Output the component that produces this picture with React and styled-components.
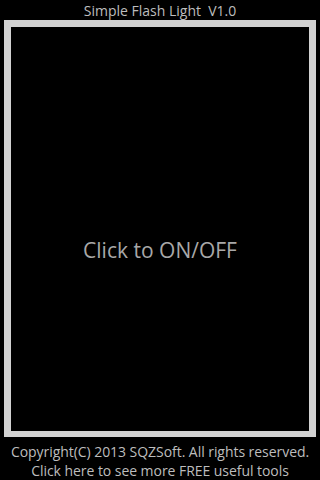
import React from "react";
import styled, { createGlobalStyle } from "styled-components";

const Global = createGlobalStyle`
  html, body {
    margin: 0;
    padding: 0;
    background: #000;
  }
  body {
    font-family: "Open Sans", "Noto Sans", sans-serif;
  }
`;

const Screen = styled.div`
  width: 320px;
  height: 480px;
  display: flex;
  flex-direction: column;
  background: #000;
  overflow: hidden;
`;

const TitleBar = styled.div`
  height: 20px;
  display: flex;
  align-items: center;
  justify-content: center;
  color: #bdbdbd;
  font-size: 14px;
  white-space: pre;
`;

const Frame = styled.button`
  flex: 1;
  margin: 0 4px;
  border: 7px solid #d2d2d2;
  border-bottom-width: 6px;
  background: #000;
  display: flex;
  align-items: center;
  justify-content: center;
  color: #a8a8a8;
  font-family: inherit;
  font-size: 21px;
  padding: 42px 0 0;
  cursor: pointer;
`;

const Footer = styled.div`
  height: 43px;
  padding-top: 4px;
  box-sizing: border-box;
  display: flex;
  flex-direction: column;
  align-items: center;
  justify-content: center;
  color: #bdbdbd;
  font-size: 14px;
  line-height: 19px;
  letter-spacing: -0.05px;
`;

const FooterLink = styled.a`
  color: inherit;
  text-decoration: none;
  cursor: pointer;
`;

export default function App() {
  const [on, setOn] = React.useState(false);

  return (
    <>
      <Global />
      <Screen>
        <TitleBar>Simple Flash Light  V1.0</TitleBar>
        <Frame onClick={() => setOn(!on)}>Click to ON/OFF</Frame>
        <Footer>
          <div>Copyright(C) 2013 SQZSoft. All rights reserved.</div>
          <FooterLink>Click here to see more FREE useful tools</FooterLink>
        </Footer>
      </Screen>
    </>
  );
}
